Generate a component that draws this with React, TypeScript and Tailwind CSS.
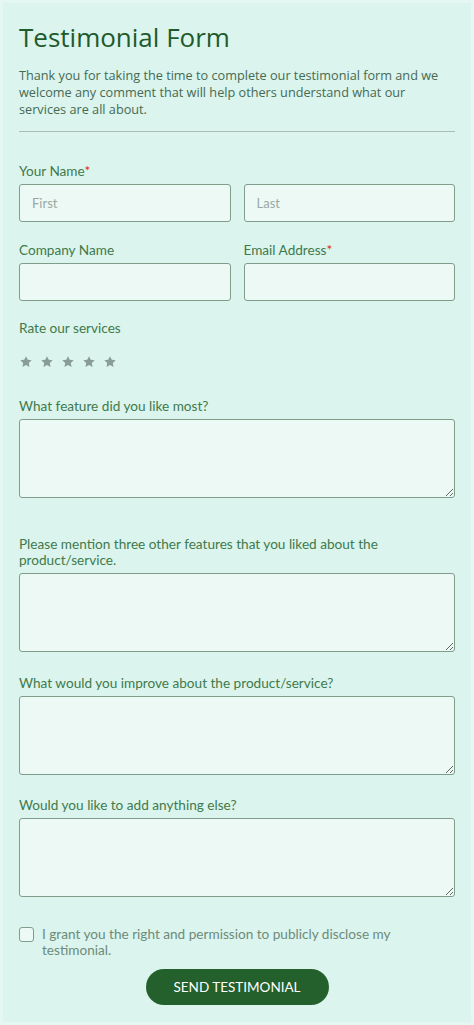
import { useState } from 'react';

const LABEL = 'text-[13.6px] leading-[16px] text-[#3f7a4c] font-["Lato","Noto_Sans",sans-serif]';
const FIELD =
  'w-full rounded-[3px] border border-[#7f9d8b] bg-[#ecf9f5] px-3 text-[13px] text-[#333] placeholder:text-[#9aa9a3] outline-none font-["Lato",sans-serif]';

function Star({ filled }: { filled: boolean }) {
  return (
    <svg viewBox="0 0 24 24" className="h-[14px] w-[14px]" aria-hidden="true">
      <path
        d="M12 2l3 6.3 6.8.8-5 4.7 1.3 6.8L12 17.2l-6.1 3.4 1.3-6.8-5-4.7 6.8-.8z"
        fill={filled ? '#e0a800' : '#8a9c97'}
      />
    </svg>
  );
}

function Area({ label, className = '' }: { label: React.ReactNode; className?: string }) {
  return (
    <div className={`flex flex-col gap-[5px] ${className}`}>
      <label className={LABEL}>{label}</label>
      <textarea className={`${FIELD} h-[79px] py-2`} />
    </div>
  );
}

export default function App() {
  const [rating, setRating] = useState(0);
  const [agree, setAgree] = useState(false);

  return (
    <div className="min-h-screen bg-[#e4f7f2] p-[3px]">
      <div className="min-h-[1019px] bg-[#dbf4ed] px-[16px] pt-[17px] pb-[16px]">
        <h1 className="font-['Open_Sans',sans-serif] text-[26px] leading-[34px] text-[#1e5a2b]">
          Testimonial Form
        </h1>
        <p className="mt-[13px] font-['Open_Sans',sans-serif] text-[12.7px] leading-[17px] text-[#466a53]">
          Thank you for taking the time to complete our testimonial form and we welcome any comment that will help others understand what our services are all about.
        </p>
        <hr className="mt-[13px] border-t border-[#a9bdb4]" />

        <div className="mt-[31px] flex flex-col gap-[5px]">
          <label className={LABEL}>
            Your Name<span className="text-[#e02424]">*</span>
          </label>
          <div className="grid grid-cols-2 gap-[13px]">
            <input className={`${FIELD} h-[38px]`} placeholder="First" />
            <input className={`${FIELD} h-[38px]`} placeholder="Last" />
          </div>
        </div>

        <div className="mt-[20px] grid grid-cols-2 gap-[13px]">
          <div className="flex flex-col gap-[5px]">
            <label className={LABEL}>Company Name</label>
            <input className={`${FIELD} h-[38px]`} />
          </div>
          <div className="flex flex-col gap-[5px]">
            <label className={LABEL}>
              Email Address<span className="text-[#e02424]">*</span>
            </label>
            <input className={`${FIELD} h-[38px]`} />
          </div>
        </div>

        <div className="mt-[19px]">
          <label className={`${LABEL} block`}>Rate our services</label>
          <div className="mt-[19px] flex items-center gap-[7px]">
            {[1, 2, 3, 4, 5].map((n) => (
              <button key={n} type="button" onClick={() => setRating(n)} aria-label={`${n} stars`} className="block">
                <Star filled={n <= rating} />
              </button>
            ))}
          </div>
        </div>

        <Area className="mt-[29px]" label="What feature did you like most?" />
        <Area className="mt-[38px]" label="Please mention three other features that you liked about the product/service." />
        <Area className="mt-[23px]" label="What would you improve about the product/service?" />
        <Area className="mt-[22px]" label="Would you like to add anything else?" />

        <label className="mt-[29px] flex items-start gap-[8px] cursor-pointer">
          <input
            type="checkbox"
            checked={agree}
            onChange={(e) => setAgree(e.target.checked)}
            className="mt-[1px] h-[15px] w-[15px] shrink-0 appearance-none rounded-[3px] border border-[#7f9d8b] bg-[#ecf9f5] checked:bg-[#24602c]"
          />
          <span className="font-['Lato',sans-serif] text-[13.6px] leading-[16px] text-[#6d8b7b]">
            I grant you the right and permission to publicly disclose my testimonial.
          </span>
        </label>

        <div className="mt-[11px] flex justify-center">
          <button
            type="button"
            className="h-[36px] w-[183px] rounded-full bg-[#24602c] font-['Lato',sans-serif] text-[13.5px] text-white"
          >
            SEND TESTIMONIAL
          </button>
        </div>
      </div>
    </div>
  );
}
